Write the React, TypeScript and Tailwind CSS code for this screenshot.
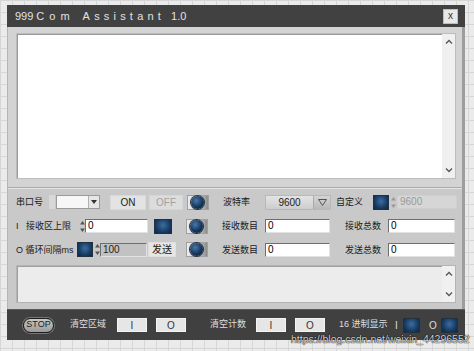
import React from "react";

const F = "font-['Liberation_Sans','Noto_Sans_CJK_SC',sans-serif]";

function Spinner({ dim }: { dim?: boolean }) {
  const c = dim ? "#9a9a9a" : "#555";
  return (
    <svg width="5" height="13" viewBox="0 0 5 13" className="shrink-0">
      <polygon points="2.5,1 5,4.5 0,4.5" fill={c} />
      <polygon points="0,8.5 5,8.5 2.5,12" fill={c} />
    </svg>
  );
}

function Led() {
  return (
    <div className="w-[22px] h-[15px] shrink-0 flex items-center pl-[3px] bg-[linear-gradient(90deg,#ececec,#cfcfcf_55%,#8c8c8c)] border border-[#a0a0a0]">
      <div className="w-[13px] h-[13px] rounded-full bg-[radial-gradient(circle_at_40%_35%,#4a78a8,#15375c_55%,#081626)] shadow-[0_0_0_1px_#233447]" />
    </div>
  );
}

function Blue({ cls }: { cls: string }) {
  return (
    <div
      className={`shrink-0 border border-[#22313f] bg-[radial-gradient(ellipse_at_50%_40%,#3d6d9e,#183d66_60%,#0c2440)] ${cls}`}
    />
  );
}

function Field({ cls, text, gray }: { cls: string; text: string; gray?: boolean }) {
  return (
    <div
      className={`shrink-0 h-[14px] border border-t-[#6e6e6e] border-l-[#6e6e6e] border-r-[#e2e2e2] border-b-[#e2e2e2] text-[10px] leading-[12px] pl-[2px] ${
        gray ? "bg-[#c2c2c2] text-[#222]" : "bg-white text-black"
      } ${cls}`}
    >
      {text}
    </div>
  );
}

function Label({ cls, children }: { cls: string; children: React.ReactNode }) {
  return <div className={`shrink-0 text-[9px] leading-[14px] text-[#1a1a1a] whitespace-nowrap ${cls}`}>{children}</div>;
}

function BarBtn({ cls, children }: { cls: string; children: React.ReactNode }) {
  return (
    <div
      className={`shrink-0 w-[30px] h-[14px] bg-[#e6e6e6] border border-[#f4f4f4] flex items-center justify-center text-[10px] text-[#333] ${cls}`}
    >
      {children}
    </div>
  );
}

function ScrollCol() {
  return (
    <div className="w-[13px] shrink-0 bg-[#f0f0f0] flex flex-col items-center justify-between py-[5px]">
      <svg width="8" height="5" viewBox="0 0 8 5">
        <polyline points="1,4.5 4,1.5 7,4.5" fill="none" stroke="#555" strokeWidth="1.3" />
      </svg>
      <svg width="8" height="5" viewBox="0 0 8 5">
        <polyline points="1,0.5 4,3.5 7,0.5" fill="none" stroke="#555" strokeWidth="1.3" />
      </svg>
    </div>
  );
}

export default function App() {
  return (
    <div
      className={`${F} relative w-[474px] h-[351px] overflow-hidden pt-[5px] pl-[7px] bg-[#ebebeb] [background-image:linear-gradient(#d6d6d6_1px,transparent_1px),linear-gradient(90deg,#d6d6d6_1px,transparent_1px)] [background-size:12px_12px]`}
    >
      <div className="w-[458px] flex flex-col">
        {/* title bar */}
        <div className="h-[22px] bg-[#414141] flex items-center pl-[8px] pr-[7px] text-[#e2e2e2] text-[11px]">
          <span>999</span>
          <span className="ml-[3px] tracking-[5px]">Com</span>
          <span className="ml-[8px] tracking-[4.2px]">Assistant</span>
          <span className="ml-[6px]">1.0</span>
          <div className="ml-auto w-[15px] h-[15px] bg-[#e8e8e8] border border-[#bdbdbd] flex items-center justify-center text-[10px] text-[#333] leading-none pb-[1px]">
            x
          </div>
        </div>

        {/* body */}
        <div className="bg-[#c9c9c9] border-r-[3px] border-r-[#9d9d9d] border-l border-l-[#b5b5b5]">
          {/* top section */}
          <div className="bg-[#d3d3d3] pt-[6px] pl-[8px] pr-[6px] pb-[8px] border-b border-b-[#a9a9a9]">
            <div className="h-[146px] flex bg-white border border-[#bcbcbc] shadow-[inset_1px_1px_0_#9a9a9a]">
              <div className="flex-1" />
              <ScrollCol />
            </div>
          </div>
          <div className="h-px bg-[#e4e4e4]" />

          {/* controls */}
          <div className="pl-[8px] pt-[1px]">
            {/* row 1 */}
            <div className="h-[24px] flex items-center">
              <Label cls="w-[33px]">串口号</Label>
              <div className="w-[6px] h-[14px] shrink-0 bg-[#d8d8d8]" />
              <div className="shrink-0 ml-[1px] w-[44px] h-[14px] flex bg-[#e6e6e6] border border-[#9a9a9a]">
                <div className="w-[32px] h-full bg-[#f7f7f7] border-r border-r-[#b0b0b0]" />
                <div className="flex-1 flex items-center justify-center">
                  <svg width="6" height="4" viewBox="0 0 6 4">
                    <polygon points="0,0 6,0 3,4" fill="#333" />
                  </svg>
                </div>
              </div>
              <div className="shrink-0 ml-[10px] w-[36px] h-[15px] bg-[#e3e3e3] border border-[#d9d9d9] flex items-center justify-center text-[10px] text-[#222]">
                ON
              </div>
              <div className="shrink-0 ml-[3px] w-[34px] h-[15px] bg-[#dcdcdc] border border-[#d6d6d6] flex items-center justify-center text-[10px] text-[#a2a2a2]">
                OFF
              </div>
              <div className="ml-[4px]">
                <Led />
              </div>
              <Label cls="ml-[14px] w-[42px]">波特率</Label>
              <div className="shrink-0 w-[66px] h-[15px] flex bg-[linear-gradient(#e4e4e4,#cdcdcd)] border border-[#b8b8b8]">
                <div className="flex-1 flex items-center justify-center text-[10px] text-[#222]">9600</div>
                <div className="w-[17px] h-full bg-[linear-gradient(#d4d4d4,#b9b9b9)] border-l border-l-[#aaa] flex items-center justify-center">
                  <svg width="9" height="7" viewBox="0 0 9 7">
                    <polygon points="0.5,0.5 8.5,0.5 4.5,6.5" fill="none" stroke="#555" strokeWidth="1" />
                  </svg>
                </div>
              </div>
              <Label cls="ml-[5px] w-[37px]">自定义</Label>
              <Blue cls="w-[16px] h-[15px]" />
              <div className="ml-[2px]">
                <Spinner dim />
              </div>
              <Field cls="ml-[1px] w-[60px] !bg-[#d6d6d6] !text-[#9a9a9a] !border-[#cfcfcf]" text="9600" />
            </div>

            {/* row 2 */}
            <div className="h-[24px] flex items-center">
              <Label cls="w-[10px]">I</Label>
              <Label cls="w-[54px]">接收区上限</Label>
              <Spinner />
              <Field cls="w-[63px]" text="0" />
              <Blue cls="ml-[6px] w-[18px] h-[15px]" />
              <div className="ml-[14px]">
                <Led />
              </div>
              <Label cls="ml-[14px] w-[43px]">接收数目</Label>
              <Field cls="w-[65px]" text="0" />
              <Label cls="ml-[15px] w-[43px]">接收总数</Label>
              <Field cls="w-[67px]" text="0" />
            </div>

            {/* row 3 */}
            <div className="h-[23px] flex items-center">
              <Label cls="w-[61px]">O 循环间隔ms</Label>
              <Blue cls="w-[16px] h-[15px]" />
              <div className="ml-[2px]">
                <Spinner />
              </div>
              <Field cls="w-[47px]" text="100" gray />
              <div className="shrink-0 ml-[1px] w-[28px] h-[15px] bg-[#e6e6e6] border border-[#dedede] flex items-center justify-center text-[10px] text-[#222]">
                发送
              </div>
              <div className="ml-[10px]">
                <Led />
              </div>
              <Label cls="ml-[14px] w-[43px]">发送数目</Label>
              <Field cls="w-[65px]" text="0" />
              <Label cls="ml-[15px] w-[43px]">发送总数</Label>
              <Field cls="w-[67px]" text="0" />
            </div>
          </div>

          {/* lower box */}
          <div className="pt-[4px] pl-[8px] pr-[6px] pb-[6px]">
            <div className="h-[38px] flex bg-[#ececec] border border-[#b4b4b4] shadow-[inset_1px_1px_0_#a0a0a0]">
              <div className="flex-1" />
              <ScrollCol />
            </div>
          </div>
        </div>

        {/* bottom bar */}
        <div className="h-[31px] bg-[#404040] border-t border-t-[#5a5a5a] flex items-center pl-[16px] text-[9px] text-[#dedede]">
          <div className="shrink-0 w-[31px] h-[15px] rounded-full bg-[linear-gradient(#c9c9c9,#9a9a9a)] border border-[#1c1c1c] shadow-[0_0_0_1px_#777] flex items-center justify-center text-[9px] text-[#1c1c1c]">
            STOP
          </div>
          <span className="shrink-0 ml-[16px] w-[36px] whitespace-nowrap">清空区域</span>
          <BarBtn cls="ml-[11px]">I</BarBtn>
          <BarBtn cls="ml-[9px]">O</BarBtn>
          <span className="shrink-0 ml-[24px] w-[36px] whitespace-nowrap">清空计数</span>
          <BarBtn cls="ml-[10px]">I</BarBtn>
          <BarBtn cls="ml-[9px]">O</BarBtn>
          <span className="shrink-0 ml-[14px] w-[49px] whitespace-nowrap">16 进制显示</span>
          <span className="shrink-0 ml-[7px] w-[3px] text-[10px]">I</span>
          <Blue cls="ml-[5px] w-[17px] h-[15px]" />
          <span className="shrink-0 ml-[9px] w-[7px] text-[10px]">O</span>
          <Blue cls="ml-[5px] w-[17px] h-[15px]" />
        </div>
      </div>

      {/* watermark */}
      <div className="absolute left-[291px] top-[332px] text-[10.5px] leading-[14px] text-[#e8e8e8]/90 [text-shadow:0_0_1px_#000,0_0_1px_#000] whitespace-nowrap">
        https://blog.csdn.net/weixin_44296552
      </div>
    </div>
  );
}
